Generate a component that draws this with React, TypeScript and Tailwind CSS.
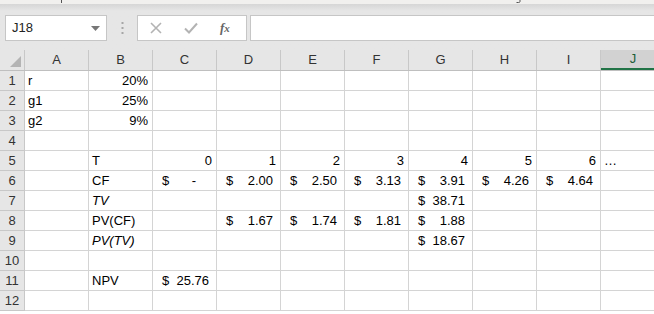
import React from "react";

type C = { t?: string; a?: "l" | "r"; i?: boolean; acc?: string; dash?: boolean };

const cols = ["A", "B", "C", "D", "E", "F", "G", "H", "I", "J"];

const rows: Record<number, Record<string, C>> = {
  1: { A: { t: "r" }, B: { t: "20%", a: "r" } },
  2: { A: { t: "g1" }, B: { t: "25%", a: "r" } },
  3: { A: { t: "g2" }, B: { t: "9%", a: "r" } },
  5: {
    B: { t: "T" },
    C: { t: "0", a: "r" },
    D: { t: "1", a: "r" },
    E: { t: "2", a: "r" },
    F: { t: "3", a: "r" },
    G: { t: "4", a: "r" },
    H: { t: "5", a: "r" },
    I: { t: "6", a: "r" },
    J: { t: "…" },
  },
  6: {
    B: { t: "CF" },
    C: { dash: true },
    D: { acc: "2.00" },
    E: { acc: "2.50" },
    F: { acc: "3.13" },
    G: { acc: "3.91" },
    H: { acc: "4.26" },
    I: { acc: "4.64" },
  },
  7: { B: { t: "TV", i: true }, G: { acc: "38.71" } },
  8: {
    B: { t: "PV(CF)" },
    D: { acc: "1.67" },
    E: { acc: "1.74" },
    F: { acc: "1.81" },
    G: { acc: "1.88" },
  },
  9: { B: { t: "PV(TV)", i: true }, G: { acc: "18.67" } },
  11: { B: { t: "NPV" }, C: { acc: "25.76" } },
};

function Cell({ c }: { c?: C }) {
  const base =
    "w-[64px] shrink-0 h-[20px] border-r border-b border-[#d4d4d4] flex items-center text-[13px] text-black whitespace-nowrap overflow-visible";
  if (!c) return <div className={base} />;
  if (c.acc) {
    return (
      <div className={base + " justify-between pl-[9px] pr-[7px]"}>
        <span>$</span>
        <span>{c.acc}</span>
      </div>
    );
  }
  if (c.dash) {
    return (
      <div className={base + " justify-between pl-[9px] pr-[20px]"}>
        <span>$</span>
        <span>-</span>
      </div>
    );
  }
  return (
    <div
      className={
        base +
        (c.a === "r" ? " justify-end pr-[4px]" : " justify-start pl-[3px]") +
        (c.i ? " italic" : "")
      }
    >
      {c.t}
    </div>
  );
}

export default function App() {
  return (
    <div
      className="w-[654px] h-[314px] overflow-hidden bg-white"
      style={{ fontFamily: '"Liberation Sans", Arial, sans-serif' }}
    >
      {/* title strip (only descenders of the title text peek in) */}
      <div className="h-[4px] bg-[#f1f0ee] flex items-start">
        <svg className="ml-[61px]" width="2" height="3" viewBox="0 0 2 3">
          <rect x="0" y="0" width="1" height="3" fill="#555" />
        </svg>
        <svg className="ml-[453px]" width="5" height="3" viewBox="0 0 5 3">
          <path d="M4 0 V1.5 Q4 2.5 2.5 2.5 H0.5" stroke="#555" strokeWidth="1" fill="none" />
        </svg>
      </div>
      {/* formula bar area */}
      <div className="h-[46px] bg-gradient-to-b from-[#d6d6d6] via-[#e6e6e6] via-[15%] to-[#e6e6e6] pt-[11px] flex items-start">
        <div className="ml-[5px] w-[102px] h-[26px] bg-white border border-[#c6c6c6] flex items-center pl-[6px] pr-[6px] justify-between">
          <span className="text-[13px] text-[#222]">J18</span>
          <svg width="9" height="5" viewBox="0 0 9 5">
            <path d="M0 0 H9 L4.5 5 Z" fill="#777" />
          </svg>
        </div>
        <div className="w-[30px] h-[26px] flex items-center justify-center">
          <svg width="3" height="12" viewBox="0 0 3 12">
            <rect x="0.5" y="0" width="2" height="2" fill="#a6a6a6" />
            <rect x="0.5" y="5" width="2" height="2" fill="#a6a6a6" />
            <rect x="0.5" y="10" width="2" height="2" fill="#a6a6a6" />
          </svg>
        </div>
        <div className="w-[110px] h-[26px] bg-white border border-[#c6c6c6] flex items-center">
          <svg className="ml-[12px]" width="12" height="12" viewBox="0 0 12 12">
            <path d="M1 1 L11 11 M11 1 L1 11" stroke="#b3b3b3" strokeWidth="1.6" />
          </svg>
          <svg className="ml-[22px]" width="14" height="12" viewBox="0 0 14 12">
            <path d="M1 6.5 L5 10.5 L13 1.5" stroke="#b3b3b3" strokeWidth="2" fill="none" />
          </svg>
          <span
            className="ml-[22px] text-[13px] italic text-[#666] font-bold"
            style={{ fontFamily: '"Liberation Serif", "Times New Roman", serif' }}
          >
            f<span className="text-[11px]">x</span>
          </span>
        </div>
        <div className="ml-[3px] flex-1 h-[26px] bg-white border border-[#c6c6c6] border-r-0" />
      </div>
      {/* column headers */}
      <div className="flex h-[21px] bg-[#e6e6e6] border-b border-[#bfbfbf]">
        <div className="w-[25px] shrink-0 h-[20px] border-r border-[#c8c8c8] flex items-end justify-end pr-[3px] pb-[3px]">
          <svg width="11" height="11" viewBox="0 0 11 11">
            <path d="M11 0 V11 H0 Z" fill="#b4b4b4" />
          </svg>
        </div>
        {cols.map((c) =>
          c === "J" ? (
            <div
              key={c}
              className="w-[64px] shrink-0 h-[20px] bg-[#d2d2d2] border-b-2 border-[#217346] flex items-center justify-center text-[13px] text-[#1b5e38]"
            >
              {c}
            </div>
          ) : (
            <div
              key={c}
              className="w-[64px] shrink-0 h-[20px] border-r border-[#c8c8c8] flex items-center justify-center text-[13px] text-[#333]"
            >
              {c}
            </div>
          )
        )}
      </div>
      {/* rows */}
      {Array.from({ length: 12 }, (_, i) => i + 1).map((r) => (
        <div key={r} className="flex">
          <div className="w-[25px] shrink-0 h-[20px] bg-[#e6e6e6] border-r border-b border-[#c8c8c8] flex items-center justify-center text-[13px] text-[#333]">
            {r}
          </div>
          {cols.map((c) => (
            <Cell key={c} c={rows[r]?.[c]} />
          ))}
        </div>
      ))}
    </div>
  );
}
